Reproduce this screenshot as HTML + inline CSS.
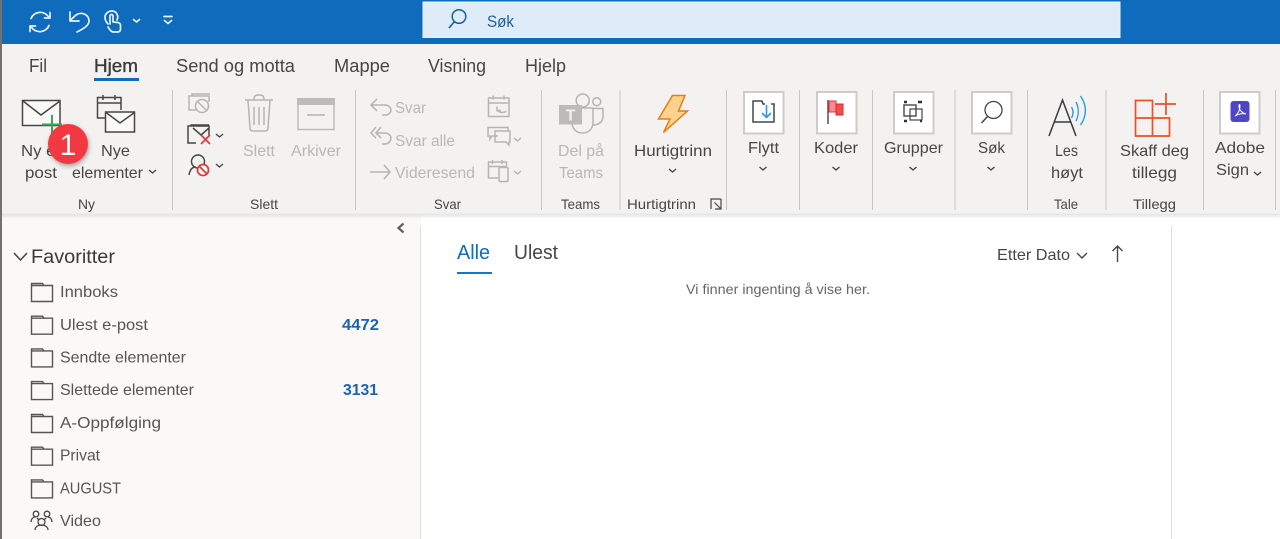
<!DOCTYPE html>
<html lang="no"><head><meta charset="utf-8"><title>Outlook</title>
<style>
html,body{margin:0;padding:0;width:1280px;height:539px;overflow:hidden;background:#fff}
svg{display:block}
text{font-family:"Liberation Sans",sans-serif;fill:#484644;font-size:16px}
.g{fill:#b9b8b6}
.s{font-size:14px}
.t{font-size:18px}
.n{font-size:16px;fill:#555}
.i{fill:none;stroke:#484644;stroke-width:1.5}
.l{fill:none;stroke:#b5b4b2;stroke-width:1.5}
.w{fill:none;stroke:#e8f1fa;stroke-width:1.7;stroke-linecap:round;stroke-linejoin:round}
.c{fill:none;stroke:#484644;stroke-width:1.4}
.b{fill:#fff;stroke:#cdccca;stroke-width:2}
.sep{stroke:#c8c6c4;stroke-width:1}
</style></head><body>
<svg width="1280" height="539" viewBox="0 0 1280 539" xmlns="http://www.w3.org/2000/svg">
<defs><filter id="sh" x="-40%" y="-40%" width="180%" height="180%"><feDropShadow dx="1" dy="2" stdDeviation="2.5" flood-color="#000" flood-opacity=".35"/></filter>
<filter id="rb" x="0" y="-50%" width="100%" height="250%"><feGaussianBlur stdDeviation="1"/></filter>
<g id="f"><path d="M31.500 285.500h21v16h-21zM31.500 285.500v-2h11l1.500 2" fill="none" stroke="#555" stroke-width="1.400"/></g></defs>

<rect width="1280" height="539" fill="#fff"/>
<rect x="0" y="215" width="421" height="324" fill="#faf9f8"/>
<rect x="0" y="44" width="1280" height="171" fill="#f3f2f1"/>
<rect x="0" y="214" width="1280" height="3" fill="#c8c6c4" opacity=".4" filter="url(#rb)"/>
<rect x="0" y="0" width="1280" height="44" fill="#0f6cbd"/>
<rect x="423" y="2" width="697" height="35.500" fill="#deecf9" stroke="#eaf3fb" stroke-width="1"/>
<path d="M1 0V539" stroke="#707070" stroke-width="2"/>

<!-- QAT -->
<path class="w" d="M31 18.500A10 10 0 0 1 49 17.500M50 12.500v5.500h-5.500M49 25.500A10 10 0 0 1 31 26.500M30 31.500v-5.500h5.500"/>
<path class="w" d="M70 12v9h9M70 20.500L76 15C82 11 89 15 89 21C89 25 85 28 77 32"/>
<path class="w" stroke-width="1.400" d="M108 24C105 21 104 17 106 14C109 10 115 10 117 14C118 16 118 18 117 20M110 24v-8a1.500 1.500 0 0 1 3 0v6l5 .5c2 .5 2.500 1.500 2.500 3.500v3c0 2-1 3-3 3h-4c-1.500 0-2.500-1-3.500-2l-2-3"/>
<path class="w" d="M133.500 19.500l3 2.500 3-2.500"/>
<path class="w" d="M164 16.500h8M164.500 20.500l3.500 3 3.500-3"/>
<circle cx="459" cy="16.500" r="6.800" fill="none" stroke="#1f5f99" stroke-width="1.500"/>
<path d="M454.500 21.500L449 28" stroke="#1f5f99" stroke-width="1.700" fill="none"/>
<text x="487" y="27" textLength="27" lengthAdjust="spacingAndGlyphs" style="fill:#1f5f99;font-size:17px">Søk</text>

<!-- tabs -->
<text class="t" x="29" y="72" textLength="18" lengthAdjust="spacingAndGlyphs">Fil</text>
<text class="t" x="94" y="72" textLength="44" lengthAdjust="spacingAndGlyphs" style="fill:#3b3a39;stroke:#3b3a39;stroke-width:.35">Hjem</text>
<rect x="94" y="78" width="45" height="3" fill="#0f6cbd"/>
<text class="t" x="176" y="72" textLength="119" lengthAdjust="spacingAndGlyphs">Send og motta</text>
<text class="t" x="334" y="72" textLength="56" lengthAdjust="spacingAndGlyphs">Mappe</text>
<text class="t" x="428" y="72" textLength="58" lengthAdjust="spacingAndGlyphs">Visning</text>
<text class="t" x="525" y="72" textLength="41" lengthAdjust="spacingAndGlyphs">Hjelp</text>

<!-- separators -->
<path class="sep" d="M172.500 90V210M355.500 90V210M541.500 90V210M620 90V210M726.500 90V210M799.500 90V210M872.500 90V210M955 90V210M1027.500 90V210M1106 90V210M1203.500 90V210M1275.500 90V210"/>

<!-- Ny -->
<rect x="22.500" y="100.500" width="37.500" height="25" fill="#f9f9f8" stroke="#484644" stroke-width="1.500"/>
<path class="i" d="M23 101L41 115L60 101"/>
<path d="M42 124.500H62M52 115V134" stroke="#3da35d" stroke-width="2" fill="none"/>
<path class="i" d="M105 118H97.500V97.500H121V110M97.500 103H121M103 95v5M115 95v5"/>
<rect x="105.500" y="112" width="29" height="20" fill="#f9f9f8" stroke="#484644" stroke-width="1.500"/>
<path class="i" d="M106 112.500L120 123L134.500 112.500"/>
<text x="21" y="156" textLength="40" lengthAdjust="spacingAndGlyphs">Ny e-</text>
<text x="25" y="178" textLength="32" lengthAdjust="spacingAndGlyphs">post</text>
<text x="101" y="156" textLength="29" lengthAdjust="spacingAndGlyphs">Nye</text>
<text x="72" y="178" textLength="71" lengthAdjust="spacingAndGlyphs">elementer</text>
<path class="c" d="M149 170l3.500 3 3.500-3"/>
<text class="s" x="78" y="209" textLength="17" lengthAdjust="spacingAndGlyphs">Ny</text>
<circle cx="68" cy="144" r="20" fill="#f2393f" filter="url(#sh)"/>
<text x="68" y="155" text-anchor="middle" style="fill:#fff;font-size:30px">1</text>

<!-- Slett -->
<path class="l" d="M196 110h-7V96h20v6M192 96v-2h18"/>
<circle cx="202" cy="106" r="6.500" class="l"/><path class="l" d="M197.500 101.500l9 9"/>
<path class="i" d="M196 143h-8v-17h21v10M191 126v-1h18M193 128l8 7 8-7"/>
<path d="M201 135l9 9M210 135l-9 9" stroke="#e0393e" stroke-width="1.700" fill="none"/>
<path class="c" d="M216 134l3.500 3 3.500-3"/>
<circle cx="198" cy="161.500" r="6.500" class="i"/><path class="i" d="M189 175c1-6 4-8 7-8"/>
<circle cx="203" cy="170" r="5.500" fill="#fff" stroke="#e0393e" stroke-width="1.800"/><path d="M199 166l8 8" stroke="#e0393e" stroke-width="1.800"/>
<path class="c" d="M216 164l3.500 3 3.500-3"/>
<path class="l" d="M245 100H273M248 100l2 28c0 2 1 3 3 3h12c2 0 3-1 3-3l2-28M254 100c0-4 1-5 5-5s5 1 5 5M254 107v18M259 107v18M264 107v18"/>
<rect x="298" y="104" width="36" height="25.500" fill="none" stroke="#bdbcba" stroke-width="1.500"/>
<rect x="297" y="98" width="38" height="7" fill="#bdbcba"/>
<path class="l" d="M307 115h18"/>
<text class="g" x="243" y="156" textLength="32" lengthAdjust="spacingAndGlyphs">Slett</text>
<text class="g" x="291" y="156" textLength="50" lengthAdjust="spacingAndGlyphs">Arkiver</text>
<text class="s" x="250" y="209" textLength="28" lengthAdjust="spacingAndGlyphs">Slett</text>

<!-- Svar -->
<path class="l" d="M377 99l-6 6 6 6M371 105h14c4 0 6 3 6 5s-2 5-5 5h-4"/>
<path class="l" d="M376 127l-5 6 5 5M381 127l-5 6 5 5M376 133h9c4 0 6 3 6 5s-2 6-6 6h-3"/>
<path class="l" d="M370 172H390M384 165l6 7-6 7"/>
<text class="g" x="395" y="113" textLength="31" lengthAdjust="spacingAndGlyphs">Svar</text>
<text class="g" x="395" y="146" textLength="60" lengthAdjust="spacingAndGlyphs">Svar alle</text>
<text class="g" x="395" y="178" textLength="80" lengthAdjust="spacingAndGlyphs">Videresend</text>
<path class="l" d="M488.500 98h20.500v18.500h-20.500zM488.500 103h20.500M493 95.500v4M504 95.500v4M506 111c-1 2-7 2-9-1M497 106.500v4h4"/>
<path class="l" d="M498 136h-6l-2 3v-3h-2v-8.500h20v3M495 131h15v11h-1v3l-3-3h-11z"/>
<path class="c" style="stroke:#b5b4b2" d="M514 138l3.500 3 3.500-3"/>
<path class="l" d="M498 178h-9.500v-16h18v4M488.500 166.500h18M492.500 160v4M502 160v4"/><rect x="499" y="167.500" width="9" height="14" rx="1" class="l"/>
<path class="c" style="stroke:#b5b4b2" d="M514 171l3.500 3 3.500-3"/>
<text class="s" x="434" y="209" textLength="27" lengthAdjust="spacingAndGlyphs">Svar</text>

<!-- Teams -->
<circle cx="582.700" cy="100.500" r="6.500" class="l"/><circle cx="596.700" cy="101.700" r="4" class="l"/>
<path class="l" d="M572 108h21v14c0 7-4.500 11-10.500 11s-10.500-4-10.500-11zM593 108.500h10v8c0 5-4 8.500-10 8.500"/>
<rect x="559" y="105" width="23" height="19.500" fill="#bcbbb9"/>
<text x="570.500" y="120.500" text-anchor="middle" style="fill:#f3f2f1;font-size:16px;font-weight:bold">T</text>
<text class="g" x="558" y="156" textLength="46" lengthAdjust="spacingAndGlyphs">Del på</text>
<text class="g" x="559" y="178" textLength="44" lengthAdjust="spacingAndGlyphs">Teams</text>
<text class="s" x="561" y="209" textLength="39" lengthAdjust="spacingAndGlyphs">Teams</text>

<!-- Hurtigtrinn -->
<path d="M672.500 95.500H685L678.500 111H687.500L663.500 132.500L670 119H658.500Z" fill="#fcd38c" stroke="#e67e10" stroke-width="1.500"/>
<text x="634" y="156" textLength="78" lengthAdjust="spacingAndGlyphs">Hurtigtrinn</text>
<path class="c" d="M669 169l3.500 3 3.500-3"/>
<text class="s" x="627" y="209" textLength="69" lengthAdjust="spacingAndGlyphs">Hurtigtrinn</text>
<path d="M711 209v-10h10M721 199v10h-6M714.500 202.500l6 6" fill="none" stroke="#484644" stroke-width="1.200"/>

<!-- boxed buttons -->
<rect class="b" x="744" y="92" width="39.500" height="41.500"/>
<path class="i" d="M753 104v18h21v-18h-3M753 104v-3h9l1 3h2"/>
<path d="M766.500 105V117.500M762 113l4.500 4.500 4.500-4.500" fill="none" stroke="#2b9ae0" stroke-width="1.600"/>
<text x="748" y="153" textLength="31" lengthAdjust="spacingAndGlyphs">Flytt</text>
<path class="c" d="M759.500 167l3.500 3 3.500-3"/>

<rect class="b" x="817" y="92" width="39.500" height="41.500"/>
<path d="M828 100V124" stroke="#484644" stroke-width="1.400"/>
<path d="M829 101h7v11h-7z" fill="#f58a92" stroke="#e0393e"/><path d="M836 104h7v11h-7z" fill="#f14c4c" stroke="#d9282f"/>
<text x="814" y="153" textLength="44" lengthAdjust="spacingAndGlyphs">Koder</text>
<path class="c" d="M832.500 167l3.500 3 3.500-3"/>

<rect class="b" x="894" y="92" width="39.500" height="41.500"/>
<rect x="904" y="105" width="12" height="11" class="c"/><rect x="910" y="109" width="12" height="11" class="c" style="stroke-width:1.200"/>
<path d="M904 102h3M918 102h4M904 121h3M920 121h2" stroke="#333" stroke-width="2.500"/>
<text x="884" y="153" textLength="59" lengthAdjust="spacingAndGlyphs">Grupper</text>
<path class="c" d="M909.500 167l3.500 3 3.500-3"/>

<rect class="b" x="972" y="92" width="39.500" height="41.500"/>
<circle cx="993.500" cy="110" r="8.500" class="i" style="stroke-width:1.300"/><path class="i" d="M987.500 116.500L981.500 123"/>
<text x="978" y="153" textLength="27" lengthAdjust="spacingAndGlyphs">Søk</text>
<path class="c" d="M987.500 167l3.500 3 3.500-3"/>

<!-- Tale -->
<path d="M1049 136L1062.500 100L1076 136M1054 122H1071" fill="none" stroke="#3b3a39" stroke-width="1.500"/>
<path d="M1071.500 107c2 3.500 2 7.500 0 11M1076 102c3 6 3 13 0 19M1080.500 96c6.500 9 6.500 20 0 29" fill="none" stroke="#2b9ae0" stroke-width="1.400"/>
<text x="1055" y="156" textLength="23" lengthAdjust="spacingAndGlyphs">Les</text>
<text x="1051" y="178" textLength="32" lengthAdjust="spacingAndGlyphs">høyt</text>
<text class="s" x="1054" y="209" textLength="24" lengthAdjust="spacingAndGlyphs">Tale</text>

<!-- Tillegg -->
<path d="M1135.500 100.500h17v35.500h-17zM1135.500 118h34v18h-17" fill="none" stroke="#e8512a" stroke-width="1.700"/>
<path d="M1166 93V115M1155 104H1176" fill="none" stroke="#e8512a" stroke-width="1.700"/>
<text x="1120" y="156" textLength="69" lengthAdjust="spacingAndGlyphs">Skaff deg</text>
<text x="1132" y="178" textLength="45" lengthAdjust="spacingAndGlyphs">tillegg</text>
<text class="s" x="1133" y="209" textLength="43" lengthAdjust="spacingAndGlyphs">Tillegg</text>

<!-- Adobe -->
<rect class="b" x="1220" y="92" width="39.500" height="41.500"/>
<rect x="1230.500" y="101" width="19" height="21" rx="3" fill="#4f46c7"/>
<path d="M1235 116c3-2 5-6 5-10c0-2-1-2-1 0c0 4 3 7 7 8c-3-1-8 0-11 2z" fill="none" stroke="#fff" stroke-width="1"/>
<text x="1215" y="153" textLength="50" lengthAdjust="spacingAndGlyphs">Adobe</text>
<text x="1216" y="175" textLength="33" lengthAdjust="spacingAndGlyphs">Sign</text>
<path class="c" d="M1254 172l3.500 3 3.500-3"/>

<!-- Folder pane -->
<path d="M403.500 223.500l-5 4.500 5 4.500" fill="none" stroke="#605e5c" stroke-width="2.200"/>
<path d="M14 253l6.500 7 6.500-7" fill="none" stroke="#484644" stroke-width="1.500"/>
<text x="31" y="263" textLength="84" lengthAdjust="spacingAndGlyphs" style="font-size:19px;fill:#3b3a39">Favoritter</text>
<use href="#f"/>
<use href="#f" y="32.700"/>
<use href="#f" y="65.400"/>
<use href="#f" y="98.100"/>
<use href="#f" y="131"/>
<use href="#f" y="163.700"/>
<use href="#f" y="196.400"/>
<text class="n" x="60" y="297" textLength="58" lengthAdjust="spacingAndGlyphs">Innboks</text>
<text class="n" x="60" y="330" textLength="88" lengthAdjust="spacingAndGlyphs">Ulest e-post</text>
<text class="n" x="60" y="362.500" textLength="126" lengthAdjust="spacingAndGlyphs">Sendte elementer</text>
<text class="n" x="60" y="395" textLength="134" lengthAdjust="spacingAndGlyphs">Slettede elementer</text>
<text class="n" x="60" y="428" textLength="101" lengthAdjust="spacingAndGlyphs">A-Oppfølging</text>
<text class="n" x="60" y="460.500" textLength="40" lengthAdjust="spacingAndGlyphs">Privat</text>
<text class="n" x="60" y="493.500" textLength="61" lengthAdjust="spacingAndGlyphs">AUGUST</text>
<text class="n" x="60" y="526" textLength="41" lengthAdjust="spacingAndGlyphs">Video</text>
<text x="342" y="330" textLength="37" lengthAdjust="spacingAndGlyphs" style="font-weight:bold;fill:#1e62b0">4472</text>
<text x="343" y="395" textLength="35" lengthAdjust="spacingAndGlyphs" style="font-weight:bold;fill:#1e62b0">3131</text>
<g fill="none" stroke="#484644" stroke-width="1.300">
<circle cx="36" cy="514" r="2.800"/><circle cx="47" cy="514" r="2.800"/><circle cx="41.500" cy="522" r="3.500"/>
<path d="M31 522c0-3 2-5 4-5M52 522c0-3-2-5-4-5M35 530c0-3 3-5 6.500-5s6.500 2 6.500 5M37 518l2 2M46 518l-2 2"/>
</g>

<!-- Lists -->
<path d="M420.500 226V539M1171.500 226V539" stroke="#e1dfdd" stroke-width="1"/>
<text x="457" y="259" textLength="33" lengthAdjust="spacingAndGlyphs" style="font-size:20px;fill:#0f6cbd">Alle</text>
<text x="514" y="259" textLength="44" lengthAdjust="spacingAndGlyphs" style="font-size:20px;fill:#484644">Ulest</text>
<rect x="457" y="272" width="35" height="2" fill="#0f78d4"/>
<text x="997" y="260" textLength="73" lengthAdjust="spacingAndGlyphs">Etter Dato</text>
<path d="M1077 253l5 5 5-5" fill="none" stroke="#484644" stroke-width="1.400"/>
<path d="M1117.500 262V246.500M1112.500 251l5-5 5 5" fill="none" stroke="#484644" stroke-width="1.400"/>
<text class="s" x="686" y="294" textLength="184" lengthAdjust="spacingAndGlyphs" style="fill:#666">Vi finner ingenting å vise her.</text>
</svg>
</body></html>
